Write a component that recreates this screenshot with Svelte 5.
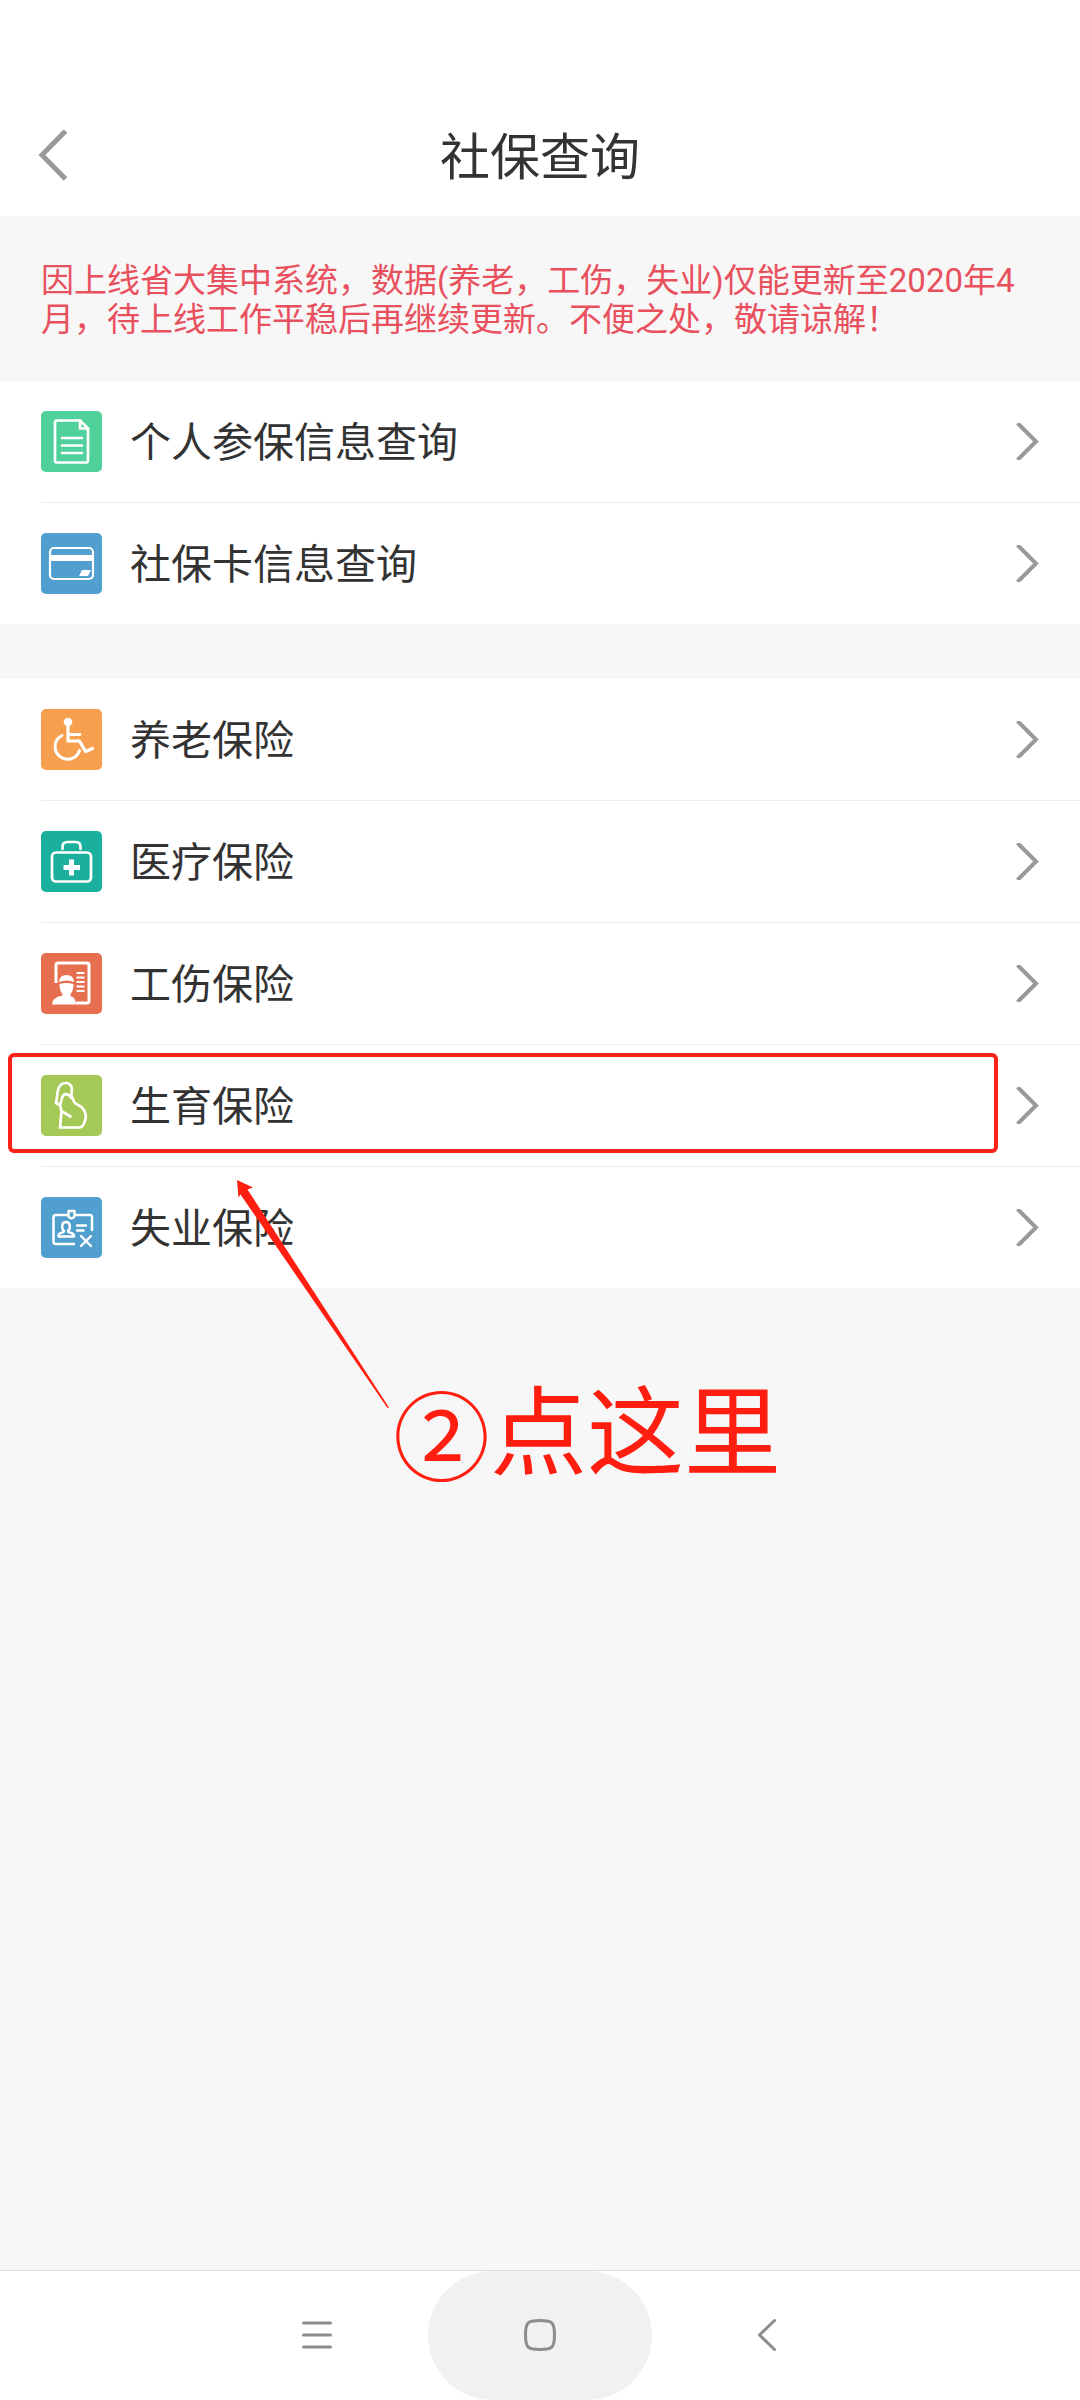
<script>
  const infoItems = [
    { icon: 'doc', color: '#50d09b', label: '个人参保信息查询' },
    { icon: 'card', color: '#509fcf', label: '社保卡信息查询' }
  ];

  const insuranceItems = [
    { icon: 'wheelchair', color: '#f6a04f', label: '养老保险' },
    { icon: 'medkit', color: '#1baf9d', label: '医疗保险' },
    { icon: 'injury', color: '#e66f50', label: '工伤保险' },
    { icon: 'maternity', color: '#a4c957', label: '生育保险', marked: true },
    { icon: 'badge', color: '#509fcf', label: '失业保险' }
  ];
</script>

{#snippet glyph(name)}
  <svg class="glyph" viewBox="0 0 61 61" aria-hidden="true">
    {#if name === 'doc'}
      <path d="M39 9.500H16q-2 0-2 2v38q0 2 2 2h29q2 0 2-2V17.500z" />
      <path d="M39 9.500v8h8" />
      <path d="M21 27h20M21 34.500h20M21 42h20" />
    {:else if name === 'card'}
      <rect x="9" y="15" width="43" height="31" rx="4" stroke-width="2.200" />
      <path class="solid" d="M9 22h43v6H9zM41 37h9l-3 6h-9z" />
    {:else if name === 'wheelchair'}
      <circle class="solid" cx="27" cy="13" r="4.300" />
      <path d="M27 14v18h11.500l6 10.500 7-3" stroke-width="3.200" />
      <path d="M28 25.500h11" stroke-width="2.800" />
      <path d="M21 26.500a12.500 12.500 0 1 0 17.500 15" stroke-width="3" />
    {:else if name === 'medkit'}
      <rect x="11" y="21.500" width="39" height="29" rx="4" />
      <path d="M21.500 18v-2q0-5 5-5h8q5 0 5 5v2" />
      <path class="solid" d="M28 28.500h5v5.500h6v5h-6v5.500h-5V39h-5.500v-5H28z" />
    {:else if name === 'injury'}
      <path d="M15 30V12q0-2 2-2h29q2 0 2 2v36q0 2-2 2H35" stroke-width="3" stroke-linecap="butt" />
      <path d="M35.500 20h8M35.500 24.500h8M35.500 29h8M35.500 33.500h8M35.500 38h8" stroke-width="2" stroke-linecap="butt" />
      <path class="solid" d="M18 28q1-6 7.500-6t7.500 6v1q-7-3-15 0zM18.500 31q6-2 14 0 0 7-3 10v2q5 1 5.500 8.500H11q0-7 10.500-9v-1.500q-3-3-3-10z" />
    {:else if name === 'maternity'}
      <path d="M15 28c1-4 1-9 2-13s4-7 8-7c5 0 7 5 5.500 9.500-1 3 1 5 2 8 1 4 5 4 8 6.500 3 3 5 7 4 12-1 4-3 8-5.500 8.500H19l1.500-16L19 30c1-2 1-5 2.500-8" />
      <path d="M15 28l4 2M21.500 22c1-4 6-4 9 1M21 36.500l8.500 5" />
    {:else}
      <path d="M26 18H15q-2.500 0-2.500 2.500v24q0 2.500 2.500 2.500h18M35 18h14q2 0 2 2.500V33" stroke-width="2.500" />
      <path d="M27.500 14h6v5.500q-3 3.500-6 0z" stroke-width="2.400" />
      <path d="M25 25c-5 0-4.500 7-2 9 0 3-6 0-5.500 5.500h15.500c0-5.500-6-2.500-6-5.500 2.500-2 3-9-2-9z" stroke-width="2.400" />
      <path d="M36 28.500h9M36 33.500h6.500M40 39l10 10M50 39l-10 10" stroke-width="2.400" />
    {/if}
  </svg>
{/snippet}

{#snippet row(item)}
  <li>
    <a class="row" href="#{item.icon}">
      <span class="tile" style="background: {item.color}">{@render glyph(item.icon)}</span>
      <span class="line">
        <span class="name">{item.label}</span>
        <svg class="chevron" viewBox="0 0 23 37" aria-hidden="true">
          <path d="M1.500 0 20 18.500 1.500 37" />
        </svg>
      </span>
      {#if item.marked}
        <span class="mark"></span>
      {/if}
    </a>
  </li>
{/snippet}

<div class="page">
  <header>
    <button class="back" aria-label="返回">
      <svg viewBox="0 0 30 52" aria-hidden="true"><path d="M27.500 1 4 25l23.500 24" /></svg>
    </button>
    <h1>社保查询</h1>
  </header>

  <main>
    <p class="notice">因上线省大集中系统，数据(养老，工伤，失业)仅能更新至2020年4月，待上线工作平稳后再继续更新。不便之处，敬请谅解！</p>

    <ul class="group">
      {#each infoItems as item}
        {@render row(item)}
      {/each}
    </ul>

    <div class="guide">
      <ul class="group">
        {#each insuranceItems as item}
          {@render row(item)}
        {/each}
      </ul>
      <svg class="arrow" viewBox="0 0 152 228" aria-hidden="true">
        <path d="M0 0 16 7.500l-5.500 2L152 227.500l-1.500.5L3.500 14.500 1.500 17.500z" />
      </svg>
      <span class="tip"><span class="step">②</span>点这里</span>
    </div>
  </main>

  <!-- system navigation -->
  <nav>
    <button aria-label="菜单">
      <svg viewBox="0 0 36 36" aria-hidden="true"><path d="M5.500 5h27M5.500 17h27M5.500 29h27" /></svg>
    </button>
    <button class="home" aria-label="主页">
      <svg viewBox="0 0 36 36" aria-hidden="true">
        <path d="M18 2.500c12 0 14.500 1.500 14.500 14.500S30 31.500 18 31.500 3.500 30 3.500 17 6 2.500 18 2.500z" />
      </svg>
    </button>
    <button aria-label="后退">
      <svg viewBox="0 0 36 36" aria-hidden="true"><path d="M28.500 2.500 13.500 17l15 14.500" /></svg>
    </button>
  </nav>
</div>

<style>
  :global(body) {
    margin: 0;
    background: #f7f7f7;
  }

  .page {
    display: flex;
    flex-direction: column;
    min-height: 100vh;
    font-family: Roboto, "Noto Sans CJK SC", sans-serif;
    color: #333;
  }

  button {
    padding: 0;
    border: 0;
    background: none;
    cursor: pointer;
  }

  svg {
    display: block;
    fill: none;
  }

  header {
    display: grid;
    grid-template-columns: 120px 1fr 120px;
    align-items: center;
    height: 120px;
    padding-top: 96px;
    background: #fff;
  }

  .back {
    justify-self: start;
    padding-left: 38px;
  }

  .back svg {
    width: 30px;
    height: 52px;
    stroke: #999;
    stroke-width: 5;
  }

  h1 {
    margin: 0;
    padding-top: 3px;
    font-size: 50px;
    line-height: 60px;
    font-weight: 400;
    text-align: center;
  }

  main {
    flex: 1;
  }

  .notice {
    margin: 0;
    padding: 45px 41px 42px;
    font-size: 33px;
    line-height: 39px;
    color: #e9505e;
  }

  .group {
    margin: 0;
    padding: 0;
    list-style: none;
    background: #fff;
  }

  .row {
    position: relative;
    display: flex;
    align-items: center;
    padding-left: 41px;
    color: inherit;
    text-decoration: none;
  }

  /* divider runs from the icon's left edge to the screen edge */
  li + li .row::before {
    content: "";
    position: absolute;
    top: -1px;
    left: 41px;
    right: 0;
    height: 1px;
    background: #ebebf0;
  }

  li + li {
    margin-top: 1px;
  }

  .tile {
    flex: none;
    width: 61px;
    height: 61px;
    border-radius: 5px;
  }

  .glyph {
    width: 100%;
    height: 100%;
    stroke: #fff;
    stroke-width: 2.7;
    stroke-linecap: round;
    stroke-linejoin: round;
  }

  .glyph .solid {
    fill: #fff;
    stroke: none;
  }

  .line {
    flex: 1;
    display: flex;
    align-items: center;
    justify-content: space-between;
    height: 121px;
    padding: 0 41px 0 28px;
  }

  .name {
    padding-top: 2px;
    font-size: 41px;
    line-height: 60px;
  }

  .chevron {
    width: 23px;
    height: 37px;
    stroke: #999;
    stroke-width: 4;
  }

  .mark {
    position: absolute;
    top: 8px;
    bottom: 13px;
    left: 8px;
    right: 82px;
    border: 4px solid #fb2318;
    border-radius: 6px;
  }

  .guide {
    position: relative;
    margin-top: 55px;
  }

  .arrow {
    position: absolute;
    top: 501px;
    left: 237px;
    width: 152px;
    height: 228px;
    fill: #ff1e10;
  }

  .tip {
    position: absolute;
    top: 705px;
    left: 393px;
    display: flex;
    font-size: 97px;
    line-height: 100px;
    color: #ff1e10;
    white-space: nowrap;
  }

  .step {
    line-height: 112px;
  }

  nav {
    display: flex;
    justify-content: center;
    height: 129px;
    border-top: 1px solid #dedede;
    background: #fff;
  }

  nav button {
    display: grid;
    place-items: center;
    width: 224px;
    height: 129px;
    border-radius: 65px;
  }

  nav .home {
    background: #f1f1f1;
  }

  nav svg {
    width: 36px;
    height: 36px;
    stroke: #8c8c8c;
    stroke-width: 3;
    stroke-linecap: round;
    stroke-linejoin: round;
  }
</style>
